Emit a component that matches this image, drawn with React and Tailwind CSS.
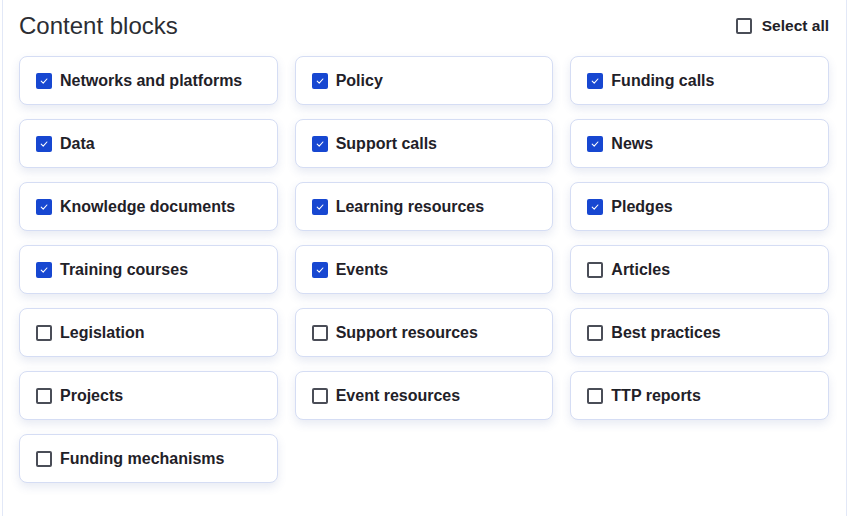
const blocks = [
  ['Networks and platforms', true],
  ['Policy', true],
  ['Funding calls', true],
  ['Data', true],
  ['Support calls', true],
  ['News', true],
  ['Knowledge documents', true],
  ['Learning resources', true],
  ['Pledges', true],
  ['Training courses', true],
  ['Events', true],
  ['Articles', false],
  ['Legislation', false],
  ['Support resources', false],
  ['Best practices', false],
  ['Projects', false],
  ['Event resources', false],
  ['TTP reports', false],
  ['Funding mechanisms', false],
];

function Checkbox({ checked }) {
  if (checked) {
    return (
      <span className="w-4 h-4 rounded-[2px] bg-[#1747d1] flex items-center justify-center shrink-0">
        <svg width="10" height="10" viewBox="0 0 10 10" fill="none">
          <path d="M2.2 5.2 L4.2 7.1 L7.9 3" stroke="white" strokeWidth="1.1" strokeLinecap="round" strokeLinejoin="round" />
        </svg>
      </span>
    );
  }
  return <span className="w-4 h-4 rounded-[2px] border-2 border-[#4a4d57] bg-white shrink-0" />;
}

export default function App() {
  return (
    <div className="w-[851px] h-[516px] bg-white pl-[2px] pr-[4px] overflow-hidden" style={{ fontFamily: '"Liberation Sans", Arial, sans-serif' }}>
      <div className="h-full border-x border-[#e2e8f7] bg-white pl-[16px] pr-[17px] pt-[12px]">
        <div className="flex items-center justify-between">
          <h2 className="text-[24px] leading-[28px] text-[#2b2d33] font-normal">Content blocks</h2>
          <label className="flex items-center gap-[10px] text-[15.5px] font-bold text-[#1f2128]">
            <Checkbox checked={false} />
            Select all
          </label>
        </div>
        <div className="grid grid-cols-3 gap-x-[17px] gap-y-[14px] mt-[16px]">
          {blocks.map(([name, checked]) => (
            <div
              key={name}
              className="h-[49px] rounded-[8px] border border-[#d5ddf4] bg-white flex items-center gap-[8px] pl-[16px] shadow-[0_4px_10px_rgba(60,80,160,0.12)]"
            >
              <Checkbox checked={checked} />
              <span className="text-[16px] font-bold text-[#1f2128] pt-[1px]">{name}</span>
            </div>
          ))}
        </div>
      </div>
    </div>
  );
}
